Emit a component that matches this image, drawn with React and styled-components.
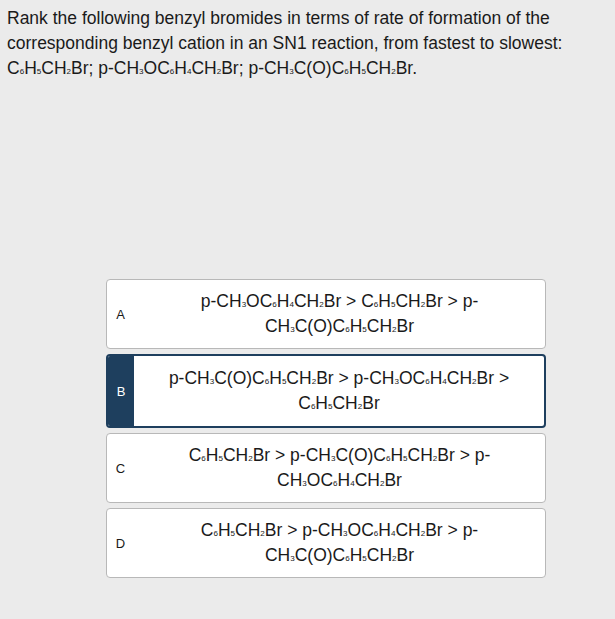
import React from 'react'
import styled, { createGlobalStyle } from 'styled-components'

const GlobalStyle = createGlobalStyle`
  html, body {
    margin: 0;
    padding: 0;
    background: #ebebeb;
  }
  body {
    font-family: "Liberation Sans", Arial, sans-serif;
    color: #1a1a1a;
  }
`

// chemical formula helper: digits after letters/parens become tiny subscripts
const Formula = ({ text }) => {
  const parts = text.split(/(\d)/)
  return (
    <>
      {parts.map((p, i) =>
        /^\d$/.test(p) && i > 0 && /[A-Za-z)]$/.test(parts[i - 1]) && !/SN$/.test(parts[i - 1])
          ? <Sub key={i}>{p}</Sub>
          : <React.Fragment key={i}>{p}</React.Fragment>
      )}
    </>
  )
}

const options = [
  { letter: 'A', text: 'p-CH3OC6H4CH2Br > C6H5CH2Br > p-CH3C(O)C6H5CH2Br' },
  { letter: 'B', text: 'p-CH3C(O)C6H5CH2Br > p-CH3OC6H4CH2Br > C6H5CH2Br', selected: true },
  { letter: 'C', text: 'C6H5CH2Br > p-CH3C(O)C6H5CH2Br > p-CH3OC6H4CH2Br' },
  { letter: 'D', text: 'C6H5CH2Br > p-CH3OC6H4CH2Br > p-CH3C(O)C6H5CH2Br' },
]

const App = () => {
  return (
    <>
      <GlobalStyle />
      <Page>
        <Question>
          <Formula text="Rank the following benzyl bromides in terms of rate of formation of the corresponding benzyl cation in an SN1 reaction, from fastest to slowest: C6H5CH2Br; p-CH3OC6H4CH2Br; p-CH3C(O)C6H5CH2Br." />
        </Question>
        <OptionList>
          {options.map(o => (
            <Option key={o.letter} selected={o.selected}>
              <Letter selected={o.selected}>{o.letter}</Letter>
              <Answer selected={o.selected}>
                <Formula text={o.text} />
              </Answer>
            </Option>
          ))}
        </OptionList>
      </Page>
    </>
  )
}

const Page = styled.div`
  width: 615px;
  min-height: 619px;
  padding: 6px 0 0 7px;
  box-sizing: border-box;
`
const Question = styled.p`
  margin: 0;
  width: 580px;
  font-size: 17.5px;
  line-height: 25px;
`
const Sub = styled.sub`
  font-size: 0.46em;
  vertical-align: -0.05em;
  line-height: 0;
`
const OptionList = styled.div`
  display: flex;
  flex-direction: column;
  gap: 5px;
  width: 440px;
  margin: 198px 0 0 99px;
`
const Option = styled.div`
  display: flex;
  background: #fff;
  border: ${p => p.selected ? '2px solid #1e3f5e' : '1px solid #b8b8b8'};
  border-radius: 4px;
  overflow: hidden;
`
const Letter = styled.div`
  width: ${p => p.selected ? '26px' : '27px'};
  flex-shrink: 0;
  display: flex;
  align-items: center;
  justify-content: center;
  font-size: 13px;
  color: ${p => p.selected ? '#fff' : '#1a1a1a'};
  background: ${p => p.selected ? '#1e3f5e' : 'transparent'};
`
const Answer = styled.div`
  flex: 1;
  text-align: center;
  font-size: 17.5px;
  line-height: 25px;
  padding: ${p => p.selected ? '10px 18px' : '9px 18px'};
`

export default App
